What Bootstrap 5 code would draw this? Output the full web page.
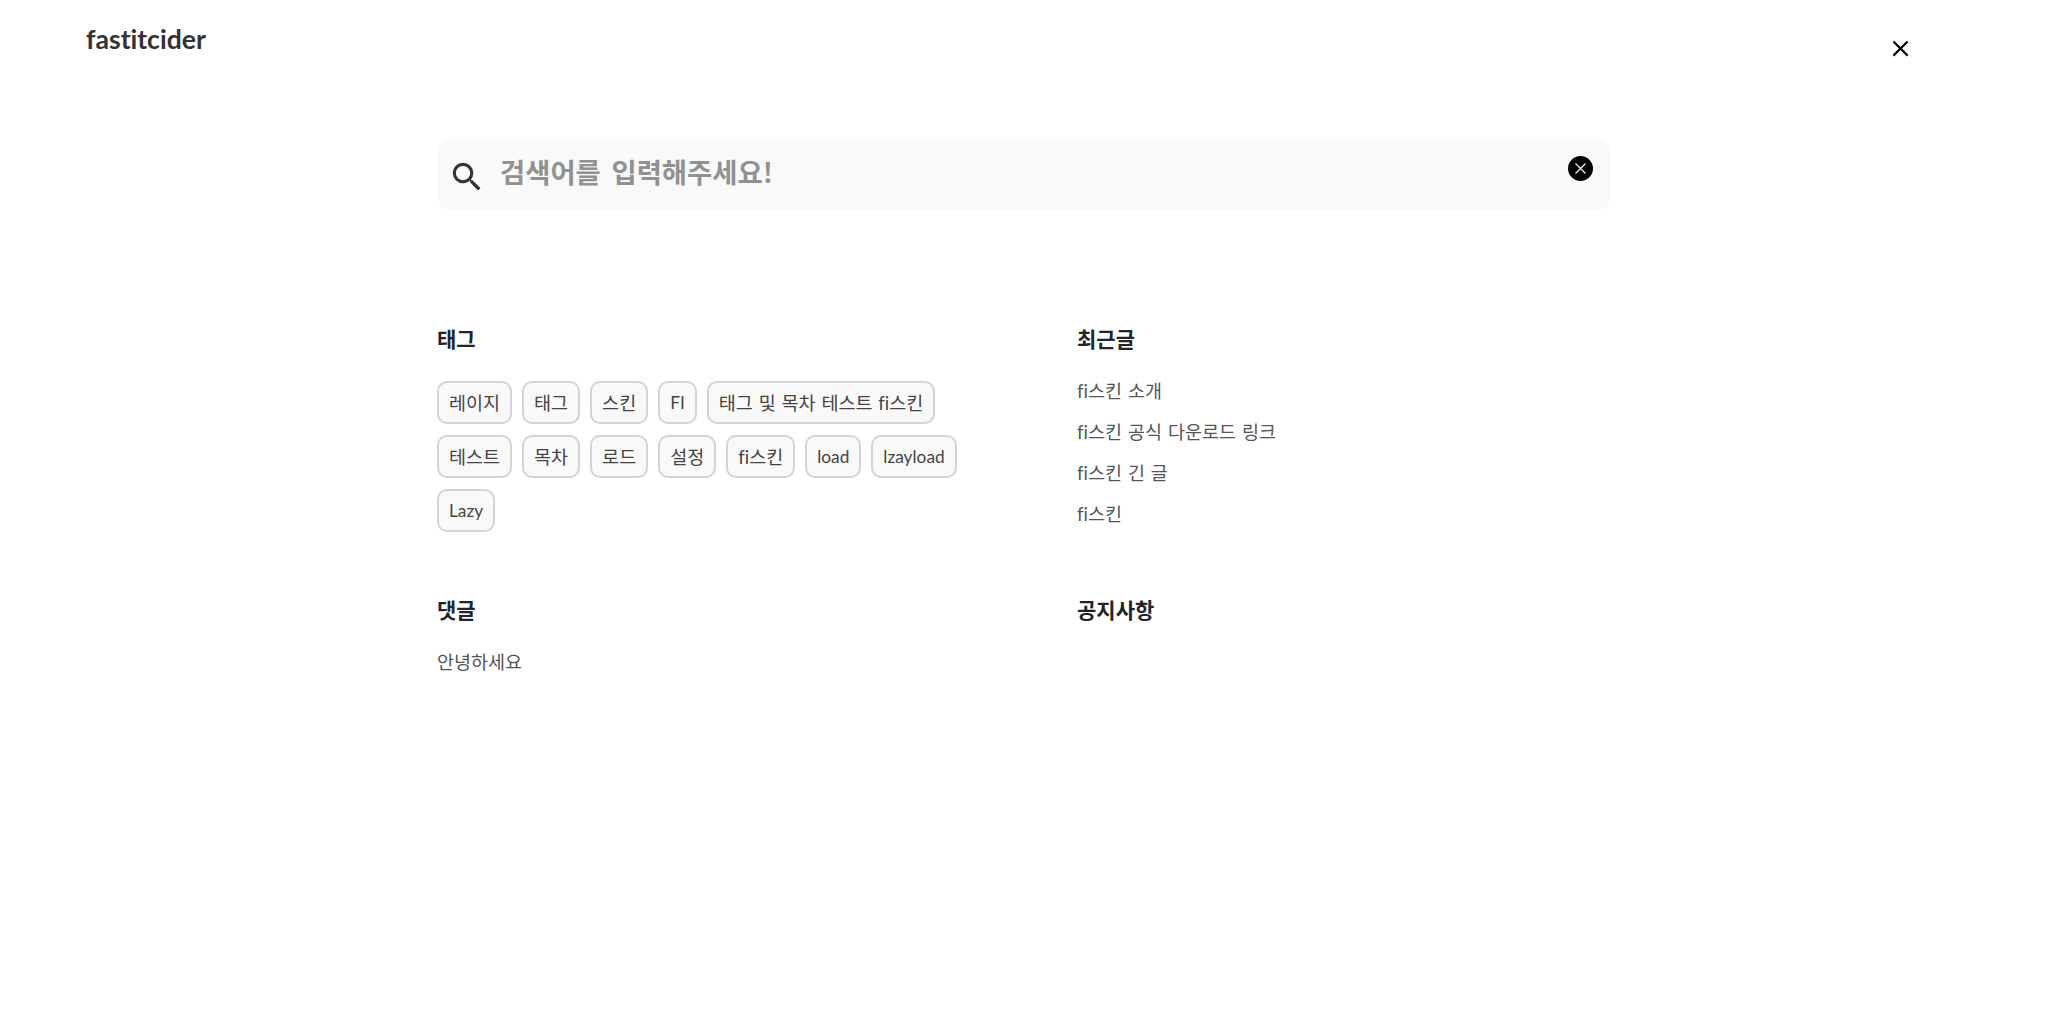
<!DOCTYPE html>
<html lang="ko">
<head>
<meta charset="utf-8">
<title>fastitcider</title>
<link href="https://cdn.jsdelivr.net/npm/bootstrap@5.3.0/dist/css/bootstrap.min.css" rel="stylesheet">
<style>
body{background:#fff;font-family:Lato,"Noto Sans CJK KR",sans-serif;font-variant-ligatures:none;color:#212529;height:1010px;overflow:hidden}
.top-bar{padding:21px 134px 0 86px;height:139px}
.brand-name{font-size:26.6px;font-weight:700;color:#333;line-height:36px;text-decoration:none}
.close-x{width:27px;height:27px;padding:0;margin-top:14px;background:none;border:0;line-height:0}
.search-wrap{width:1174px;margin:0 auto}
.search-box{height:71px;background:#f9f9f9;border-radius:14px;padding:0 18px 0 11px}
.search-input{flex:1;border:0;background:transparent;outline:0;font-size:27.4px;font-weight:700;padding:0 0 5px 14px;color:#333;word-spacing:3px;font-family:"Noto Sans CJK KR",sans-serif}
.search-input::placeholder{color:#919191;opacity:1}
.search-icon{margin-top:5px;flex:none}
.search-clear{width:25px;height:25px;padding:0;background:none;border:0;line-height:0;margin-bottom:12px}
.cols{display:grid;grid-template-columns:640px 1fr;margin-top:113px}
.cell{height:271px}
.cell-title{font-size:21px;font-weight:700;line-height:30px;margin:0 0 18px;color:#212529;font-family:"Noto Sans CJK KR",sans-serif}
.chips{max-width:530px;gap:11px 10px;margin-top:28px}
.chip{display:block;height:43px;padding:0 10px;line-height:40px;font-size:18.5px;color:#444;background:#f9f9f9;border:2px solid #d4d4d4;border-radius:10px;text-decoration:none;word-spacing:.06em}
.chip-en{font-size:17.3px}
.post-link{display:block;font-size:18.5px;line-height:41px;color:#555;text-decoration:none;word-spacing:.065em}
</style>
</head>
<body>
<header class="top-bar d-flex justify-content-between align-items-start">
  <a class="brand-name" href="#">fastitcider</a>
  <button class="close-x" type="button" aria-label="닫기">
    <svg width="27" height="27" viewBox="0 0 24 24"><path fill="#000" d="M19 6.41 17.59 5 12 10.59 6.41 5 5 6.41 10.59 12 5 17.59 6.41 19 12 13.41 17.59 19 19 17.59 13.41 12z"/></svg>
  </button>
</header>
<main class="search-wrap">
  <form class="search-box d-flex align-items-center">
    <svg class="search-icon" width="38" height="38" viewBox="0 0 24 24"><path fill="#333" d="M15.5 14h-.79l-.28-.27A6.471 6.471 0 0 0 16 9.5 6.5 6.5 0 1 0 9.5 16c1.61 0 3.09-.59 4.23-1.57l.27.28v.79l5 4.99L20.49 19l-4.99-5zm-6 0C7.01 14 5 11.99 5 9.5S7.01 5 9.5 5 14 7.01 14 9.5 11.99 14 9.5 14z"/></svg>
    <input class="search-input" type="text" placeholder="검색어를 입력해주세요!">
    <button class="search-clear" type="button" aria-label="지우기">
      <svg width="25" height="25" viewBox="0 0 25 25"><circle cx="12.5" cy="12.5" r="12.5" fill="#000"/><path d="M7.5 7.5l10 10M17.5 7.5l-10 10" stroke="#eee" stroke-width="1.3" fill="none"/></svg>
    </button>
  </form>
  <div class="cols">
    <section class="cell">
      <h2 class="cell-title">태그</h2>
      <div class="chips d-flex flex-wrap">
        <a class="chip" href="#">레이지</a><a class="chip" href="#">태그</a><a class="chip" href="#">스킨</a><a class="chip chip-en" href="#">FI</a><a class="chip" href="#">태그 및 목차 테스트 fi스킨</a><a class="chip" href="#">테스트</a><a class="chip" href="#">목차</a><a class="chip" href="#">로드</a><a class="chip" href="#">설정</a><a class="chip" href="#">fi스킨</a><a class="chip chip-en" href="#">load</a><a class="chip chip-en" href="#">lzayload</a><a class="chip chip-en" href="#">Lazy</a>
      </div>
    </section>
    <section class="cell">
      <h2 class="cell-title">최근글</h2>
      <a class="post-link" href="#">fi스킨 소개</a>
      <a class="post-link" href="#">fi스킨 공식 다운로드 링크</a>
      <a class="post-link" href="#">fi스킨 긴 글</a>
      <a class="post-link" href="#">fi스킨</a>
    </section>
    <section class="cell">
      <h2 class="cell-title">댓글</h2>
      <a class="post-link" href="#">안녕하세요</a>
    </section>
    <section class="cell">
      <h2 class="cell-title">공지사항</h2>
    </section>
  </div>
</main>
<script src="https://cdn.jsdelivr.net/npm/bootstrap@5.3.0/dist/js/bootstrap.bundle.min.js"></script>
</body>
</html>
